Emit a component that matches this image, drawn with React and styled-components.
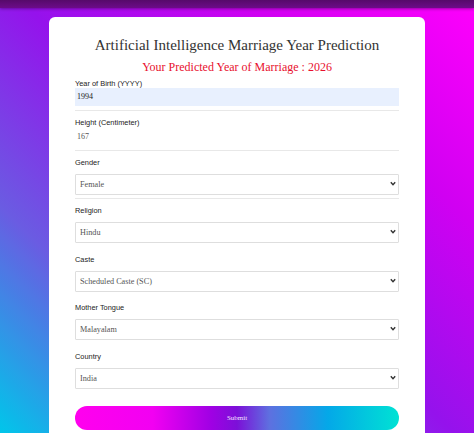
import React from "react";
import styled, { createGlobalStyle } from "styled-components";

const GlobalStyle = createGlobalStyle`
  html, body {
    margin: 0;
    padding: 0;
  }
  * {
    box-sizing: border-box;
  }
`;

const Page = styled.div`
  height: 100vh;
  overflow: hidden;
  display: flex;
  flex-direction: column;
  background: linear-gradient(45deg, #00c6ea 0%, #6a5ce2 25%, #9512ec 50%, #d000f2 75%, #ff00fc 100%);
`;

const TopBar = styled.div`
  height: 8px;
  flex-shrink: 0;
  background: linear-gradient(to bottom, #560a6a, #6c0c88);
  box-shadow: 0 1px 3px rgba(60, 0, 80, 0.5);
`;

const Card = styled.div`
  width: 376px;
  margin: 9px auto 0;
  flex-shrink: 0;
  background: #fff;
  border-radius: 6px;
  padding: 19px 26px 20px;
`;

const Title = styled.h1`
  margin: 0;
  font-family: "Liberation Serif", "Times New Roman", serif;
  font-weight: normal;
  font-size: 15px;
  line-height: 18px;
  text-align: center;
  color: #333;
`;

const Result = styled.h2`
  margin: 6px 0 0;
  font-family: "Liberation Serif", "Times New Roman", serif;
  font-weight: normal;
  font-size: 12px;
  line-height: 14px;
  text-align: center;
  color: #e8102e;
`;

const Form = styled.form`
  margin-top: 4.5px;
  display: flex;
  flex-direction: column;
`;

const Group = styled.div`
  display: flex;
  flex-direction: column;
  margin-bottom: ${props => (props.$lined ? "7px" : "12.5px")};
  padding-bottom: ${props => (props.$lined ? "4.5px" : "0")};
  border-bottom: ${props => (props.$lined ? "1.5px solid #e8e8e8" : "none")};
`;

const Label = styled.label`
  display: block;
  font-family: "Liberation Sans", Arial, sans-serif;
  font-size: 7.4px;
  line-height: 9px;
  color: #222;
  margin-bottom: ${props => (props.$select ? "6px" : "0")};
`;

const TextInput = styled.input`
  height: 18px;
  width: 100%;
  border: none;
  outline: none;
  padding: 0 2px;
  font-family: "Liberation Serif", "Times New Roman", serif;
  font-size: 8px;
  color: ${props => (props.$filled ? "#222" : "#555")};
  background: ${props => (props.$filled ? "#e8f0fe" : "#fff")};
`;

const SelectWrap = styled.div`
  position: relative;
  height: 21px;
`;

const Select = styled.select`
  appearance: none;
  width: 100%;
  height: 100%;
  border: 1px solid #dedede;
  border-radius: 1px;
  background: #fff;
  padding: 0 14px 0 4px;
  font-family: "Liberation Serif", "Times New Roman", serif;
  font-size: 8.2px;
  color: #555;
  outline: none;
`;

const Chevron = styled.svg`
  position: absolute;
  right: 3px;
  top: 8px;
  width: 6px;
  height: 5px;
  pointer-events: none;
`;

const SubmitButton = styled.button`
  margin-top: 5.5px;
  height: 24px;
  width: 100%;
  border: none;
  border-radius: 12px;
  cursor: pointer;
  background: linear-gradient(to right, #ff00ee 0%, #f200f2 24%, #a000e4 42%, #7c10d8 50%, #5e70e0 60%, #04a8e8 78%, #00e2d4 100%);
  font-family: "Liberation Serif", "Times New Roman", serif;
  font-size: 7px;
  color: #f4e4ff;
`;

const selects = [
  { label: "Gender", value: "Female", lined: true },
  { label: "Religion", value: "Hindu" },
  { label: "Caste", value: "Scheduled Caste (SC)" },
  { label: "Mother Tongue", value: "Malayalam" },
  { label: "Country", value: "India" },
];

const App = () => {
  return (
    <>
      <GlobalStyle />
      <Page>
        <TopBar />
        <Card>
          <Title>Artificial Intelligence Marriage Year Prediction</Title>
          <Result>Your Predicted Year of Marriage : 2026</Result>
          <Form onSubmit={e => e.preventDefault()}>
            <Group $lined>
              <Label>Year of Birth (YYYY)</Label>
              <TextInput $filled defaultValue="1994" />
            </Group>
            <Group $lined>
              <Label>Height (Centimeter)</Label>
              <TextInput defaultValue="167" />
            </Group>
            {selects.map(item => (
              <Group key={item.label} $lined={item.lined}>
                <Label $select>{item.label}</Label>
                <SelectWrap>
                  <Select defaultValue={item.value}>
                    <option>{item.value}</option>
                  </Select>
                  <Chevron viewBox="0 0 6 5">
                    <path d="M0.8 1.2 L3 3.6 L5.2 1.2" fill="none" stroke="#333" strokeWidth="1.4" />
                  </Chevron>
                </SelectWrap>
              </Group>
            ))}
            <SubmitButton type="submit">Submit</SubmitButton>
          </Form>
        </Card>
      </Page>
    </>
  );
};

export default App;
